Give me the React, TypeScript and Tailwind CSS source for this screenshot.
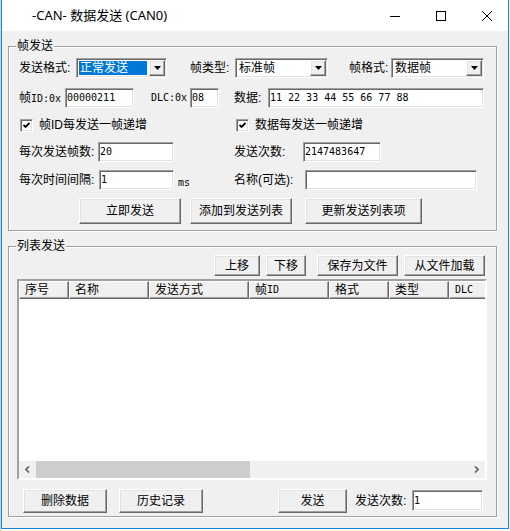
import React from "react";

const sunken =
  "bg-white border border-t-[#a0a0a0] border-l-[#a0a0a0] border-r-white border-b-white shadow-[inset_1px_1px_0_#696969,inset_-1px_-1px_0_#e3e3e3]";
const raised =
  "bg-[#f0f0f0] border border-t-white border-l-white border-r-[#696969] border-b-[#696969] shadow-[inset_-1px_-1px_0_#a0a0a0,inset_1px_1px_0_#e3e3e3]";
const mono = "font-['DejaVu_Sans_Mono',monospace] text-[10px]";
const groupBox =
  "relative w-[489px] border border-[#a0a0a0] shadow-[inset_1px_1px_0_#fff,1px_1px_0_#fff]";

function Input({ className, value }: { className: string; value?: string }) {
  return (
    <div className={`${sunken} ${className} h-[20px] flex items-center pl-[1px] ${mono} whitespace-pre`}>
      {value}
    </div>
  );
}

function Arrow() {
  return (
    <svg width="7" height="4" viewBox="0 0 7 4">
      <path d="M0 0h7L3.5 4z" fill="#000" />
    </svg>
  );
}

function Combo({ className, value, selected }: { className: string; value: string; selected?: boolean }) {
  return (
    <div className={`${sunken} ${className} h-[20px] flex items-stretch p-[1px]`}>
      <div className="flex-1 flex items-stretch p-[1px] pr-[2px]">
        {selected ? (
          <span className="flex-1 bg-[#0078d7] text-white flex items-center pl-[1px]">{value}</span>
        ) : (
          <span className="flex items-center pl-[1px]">{value}</span>
        )}
      </div>
      <div className={`${raised} w-[16px] flex items-center justify-center`}>
        <Arrow />
      </div>
    </div>
  );
}

function Btn({ className, label }: { className: string; label: string }) {
  return <div className={`${raised} ${className} flex items-center justify-center`}>{label}</div>;
}

function Check({ label }: { label: string }) {
  return (
    <div className="flex items-center gap-[6px]">
      <span className={`${sunken} w-[13px] h-[13px] flex items-center justify-center`}>
        <svg width="7" height="7" viewBox="0 0 7 7">
          <path d="M0.5 3 L2.5 5 L6.5 1" stroke="#000" strokeWidth="1.8" fill="none" />
        </svg>
      </span>
      <span>{label}</span>
    </div>
  );
}

function Legend({ text }: { text: string }) {
  return (
    <span className="absolute left-[7px] top-[-8px] px-[1px] bg-[#f0f0f0] leading-[14px]">{text}</span>
  );
}

const columns: { label: React.ReactNode; w: string }[] = [
  { label: "序号", w: "w-[50px]" },
  { label: "名称", w: "w-[80px]" },
  { label: "发送方式", w: "w-[100px]" },
  {
    label: (
      <>
        帧<span className={mono}>ID</span>
      </>
    ),
    w: "w-[80px]",
  },
  { label: "格式", w: "w-[60px]" },
  { label: "类型", w: "w-[60px]" },
  { label: <span className={mono}>DLC</span>, w: "w-[60px]" },
];

export default function App() {
  return (
    <div className="w-[510px] h-[531px] bg-white border-l border-l-[#d4d4d4] font-['Liberation_Sans','Noto_Sans_CJK_SC',sans-serif] text-[12px] leading-none text-black">
      <div className="w-[508px] h-[529px] border-l border-r border-b border-[#1883d7] bg-[#f0f0f0] flex flex-col">
        {/* title bar */}
        <div className="h-[31px] bg-white flex items-center">
          <span className="pl-[30px] font-['Noto_Sans','Noto_Sans_CJK_SC',sans-serif] text-[13px]">
            -CAN- 数据发送 (CAN0)
          </span>
          <div className="ml-auto flex h-full">
            <div className="w-[46px] flex items-center justify-center pl-[4px]">
              <svg width="10" height="10" viewBox="0 0 10 10">
                <path d="M0 5.5h10" stroke="#000" strokeWidth="1" />
              </svg>
            </div>
            <div className="w-[46px] flex items-center justify-center pl-[4px]">
              <svg width="10" height="10" viewBox="0 0 10 10">
                <rect x="0.5" y="0.5" width="9" height="9" stroke="#000" strokeWidth="1" fill="none" />
              </svg>
            </div>
            <div className="w-[46px] flex items-center justify-center pl-[4px]">
              <svg width="10" height="10" viewBox="0 0 10 10">
                <path d="M0 0L10 10M10 0L0 10" stroke="#000" strokeWidth="1" />
              </svg>
            </div>
          </div>
        </div>

        {/* client area */}
        <div className="flex-1 pt-[15px] pl-[6px] flex flex-col">
          {/* frame send */}
          <div className={`${groupBox} h-[185px] flex flex-col`}>
            <Legend text="帧发送" />
            <div className="mt-[11px] h-[20px] pl-[10px] flex items-center">
              <span className="w-[57px]">发送格式:</span>
              <Combo className="w-[91px]" value="正常发送" selected />
              <span className="ml-[23px] w-[45px]">帧类型:</span>
              <Combo className="w-[93px]" value="标准帧" />
              <span className="ml-[21px] w-[42px]">帧格式:</span>
              <Combo className="w-[93px]" value="数据帧" />
            </div>

            <div className="mt-[10px] h-[20px] pl-[10px] flex items-center">
              <div className="w-[215px] flex items-center">
                <span className="w-[46px]">
                  帧<span className={mono}>ID:0x</span>
                </span>
                <Input className="w-[69px]" value="00000211" />
                <span className={`ml-[17px] w-[39px] ${mono}`}>DLC:0x</span>
                <Input className="w-[29px]" value="08" />
              </div>
              <span className="w-[34px]">数据:</span>
              <Input className="w-[216px]" value="11 22 33 44 55 66 77 88" />
            </div>

            <div className="mt-[10px] h-[14px] pl-[11px] flex items-center">
              <div className="w-[216px]">
                <Check label="帧ID每发送一帧递增" />
              </div>
              <Check label="数据每发送一帧递增" />
            </div>

            <div className="mt-[10px] h-[20px] pl-[10px] flex items-center">
              <div className="w-[215px] flex items-center">
                <span className="w-[79px]">每次发送帧数:</span>
                <Input className="w-[76px]" value="20" />
              </div>
              <span className="w-[69px]">发送次数:</span>
              <Input className="w-[78px]" value="2147483647" />
            </div>

            <div className="mt-[8px] h-[20px] pl-[10px] flex items-center">
              <div className="w-[215px] flex items-center">
                <span className="w-[80px]">每次时间间隔:</span>
                <Input className="w-[75px]" value="1" />
                <span className={`ml-[4px] mt-[5px] ${mono}`}>ms</span>
              </div>
              <span className="w-[71px]">名称(可选):</span>
              <Input className="w-[172px]" value="" />
            </div>

            <div className="mt-[8px] pl-[70px] flex items-center">
              <Btn className="w-[102px] h-[26px]" label="立即发送" />
              <Btn className="ml-[9px] w-[102px] h-[26px]" label="添加到发送列表" />
              <Btn className="ml-[13px] w-[117px] h-[26px]" label="更新发送列表项" />
            </div>
          </div>

          {/* list send */}
          <div className={`${groupBox} mt-[15px] h-[271px] flex flex-col`}>
            <Legend text="列表发送" />
            <div className="mt-[8px] pl-[205px] flex items-center">
              <Btn className="w-[46px] h-[21px]" label="上移" />
              <Btn className="ml-[6px] w-[40px] h-[21px]" label="下移" />
              <Btn className="ml-[11px] w-[81px] h-[21px]" label="保存为文件" />
              <Btn className="ml-[6px] w-[81px] h-[21px]" label="从文件加载" />
            </div>

            <div
              className={`ml-[8px] mt-[3px] w-[470px] h-[201px] border-2 border-t-[#a0a0a0] border-l-[#a0a0a0] border-r-white border-b-white bg-white flex flex-col`}
            >
              <div className="h-[18px] flex overflow-hidden shrink-0">
                {columns.map((c, i) => (
                  <div
                    key={i}
                    className={`${c.w} shrink-0 h-full bg-[#f0f0f0] border border-t-white border-l-white border-r-[#696969] border-b-[#696969] shadow-[inset_-1px_-1px_0_#a0a0a0] flex items-center pl-[5px]`}
                  >
                    {c.label}
                  </div>
                ))}
              </div>
              <div className="flex-1 bg-white" />
              <div className="h-[17px] bg-[#f0f0f0] flex shrink-0">
                <div className="w-[17px] flex items-center justify-center">
                  <svg width="5" height="7" viewBox="0 0 5 7">
                    <path d="M4 0.5L1 3.5L4 6.5" stroke="#606060" strokeWidth="1.6" fill="none" />
                  </svg>
                </div>
                <div className="w-[214px] bg-[#cdcdcd]" />
                <div className="flex-1" />
                <div className="w-[17px] flex items-center justify-center">
                  <svg width="5" height="7" viewBox="0 0 5 7">
                    <path d="M1 0.5L4 3.5L1 6.5" stroke="#606060" strokeWidth="1.6" fill="none" />
                  </svg>
                </div>
              </div>
            </div>

            <div className="mt-[9px] pl-[14px] flex items-start">
              <Btn className="w-[84px] h-[24px]" label="删除数据" />
              <Btn className="ml-[12px] w-[84px] h-[24px]" label="历史记录" />
              <Btn className="ml-[75px] w-[69px] h-[24px]" label="发送" />
              <span className="ml-[8px] w-[57px] h-[24px] flex items-center">发送次数:</span>
              <Input className="mt-[1px] w-[71px] h-[21px]" value="1" />
            </div>
          </div>
        </div>
      </div>
    </div>
  );
}
